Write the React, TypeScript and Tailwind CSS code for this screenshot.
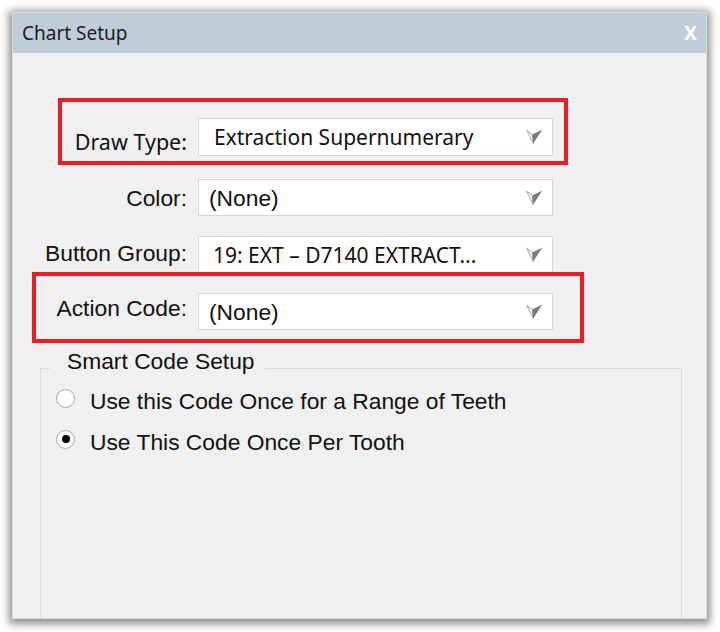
import React from "react";

const SEGOE = { fontFamily: '"Noto Sans", "Open Sans", sans-serif' };

function Arrow() {
  return (
    <svg width="17" height="16" viewBox="0 0 17 16" className="shrink-0">
      <polygon points="0.7,1.2 6.3,5.6 7.3,14.6" fill="#ffffff" stroke="#a3a3a3" strokeWidth="1" strokeLinejoin="round" />
      <polygon points="6.3,5.6 16.3,0.4 7.3,14.6" fill="#7b7b7b" />
    </svg>
  );
}

function Select({
  text,
  pl,
  segoe,
  h,
}: {
  text: string;
  pl: string;
  segoe?: boolean;
  h: string;
}) {
  return (
    <div
      className={`w-[355px] ${h} bg-white border border-[#d6d6d6] flex items-center justify-between pr-[9px] ${pl} shrink-0`}
    >
      <span
        className={
          segoe
            ? "text-[21px] leading-[26px] text-[#111] font-['Noto_Sans',sans-serif]"
            : "text-[22.8px] leading-[26px] text-[#111] font-['Liberation_Sans',Arial,sans-serif]"
        }
      >
        {text}
      </span>
      <Arrow />
    </div>
  );
}

function Radio({ checked }: { checked?: boolean }) {
  return (
    <div className="w-[19px] h-[19px] rounded-full border border-[#a8a8a8] bg-white flex items-center justify-center shrink-0 -mt-[6px]">
      {checked && <div className="w-[8px] h-[8px] rounded-full bg-black" />}
    </div>
  );
}

export default function App() {
  return (
    <div className="w-[720px] h-[632px] bg-white overflow-hidden">
      <div className="ml-[12px] pt-[12px]">
        <div className="w-[695px] h-[607px] border border-[#dcdcdc] bg-[#f0f0f0] shadow-[0_2px_8px_3px_rgba(0,0,0,0.45)] overflow-hidden flex flex-col">
          {/* Title bar */}
          <div className="h-[40px] shrink-0 bg-[#bfcdda] flex items-center justify-between pl-[9px] pr-[9px]">
            <span className="text-[19px] text-[#1b1b1b] leading-[26px]" style={SEGOE}>
              Chart Setup
            </span>
            <span className="text-[19px] font-bold text-white leading-[26px] mt-[-1px]" style={SEGOE}>
              X
            </span>
          </div>

          {/* Body */}
          <div className="flex flex-col pt-[45px]">
            {/* Draw Type (highlighted) */}
            <div className="ml-[45px] w-[510px] h-[67px] border-4 border-[#ed1c24] flex items-end pb-[5px] gap-[11px]">
              <div
                className="w-[125px] text-right text-[21.5px] leading-[26px] text-[#111] mb-[1px]"
                style={SEGOE}
              >
                Draw Type:
              </div>
              <Select text="Extraction Supernumerary" pl="pl-[15px]" segoe h="h-[38px]" />
            </div>

            {/* Color */}
            <div className="mt-[14px] flex items-center gap-[11px]">
              <div className="w-[174px] text-right text-[22.8px] leading-[26px] text-[#111] font-['Liberation_Sans',Arial,sans-serif]">
                Color:
              </div>
              <Select text="(None)" pl="pl-[10px]" h="h-[37px]" />
            </div>

            {/* Button Group */}
            <div className="mt-[20px] flex items-center gap-[11px]">
              <div className="w-[174px] text-right text-[22.8px] leading-[26px] text-[#111] font-['Liberation_Sans',Arial,sans-serif] mt-[-4px]">
                Button Group:
              </div>
              <Select text="19: EXT – D7140 EXTRACT..." pl="pl-[14px]" segoe h="h-[37px]" />
            </div>

            {/* Action Code (highlighted) */}
            <div className="-mt-[1px] ml-[19px] w-[552px] h-[71px] border-4 border-[#ed1c24] flex items-center pt-[8px] gap-[11px]">
              <div className="w-[151px] text-right text-[22.8px] leading-[26px] text-[#111] font-['Liberation_Sans',Arial,sans-serif] mt-[-8px]">
                Action Code:
              </div>
              <Select text="(None)" pl="pl-[10px]" h="h-[37px]" />
            </div>

            {/* Smart Code Setup */}
            <fieldset className="mt-[5px] ml-[27px] w-[642px] h-[400px] border border-[#dcdcdc] pl-[9px] m-0">
              <legend className="pl-[17px] pr-[10px] pb-[14px] text-[22.8px] leading-[26px] text-[#111] font-['Liberation_Sans',Arial,sans-serif]">
                Smart Code Setup
              </legend>
              <div className="pl-[6px] flex flex-col gap-[15px]">
                <div className="flex items-center h-[26px] gap-[15px]">
                  <Radio />
                  <span className="text-[22.8px] leading-[26px] text-[#111] font-['Liberation_Sans',Arial,sans-serif]">
                    Use this Code Once for a Range of Teeth
                  </span>
                </div>
                <div className="flex items-center h-[26px] gap-[15px]">
                  <Radio checked />
                  <span className="text-[22.8px] leading-[26px] text-[#111] font-['Liberation_Sans',Arial,sans-serif]">
                    Use This Code Once Per Tooth
                  </span>
                </div>
              </div>
            </fieldset>
          </div>
        </div>
      </div>
    </div>
  );
}
